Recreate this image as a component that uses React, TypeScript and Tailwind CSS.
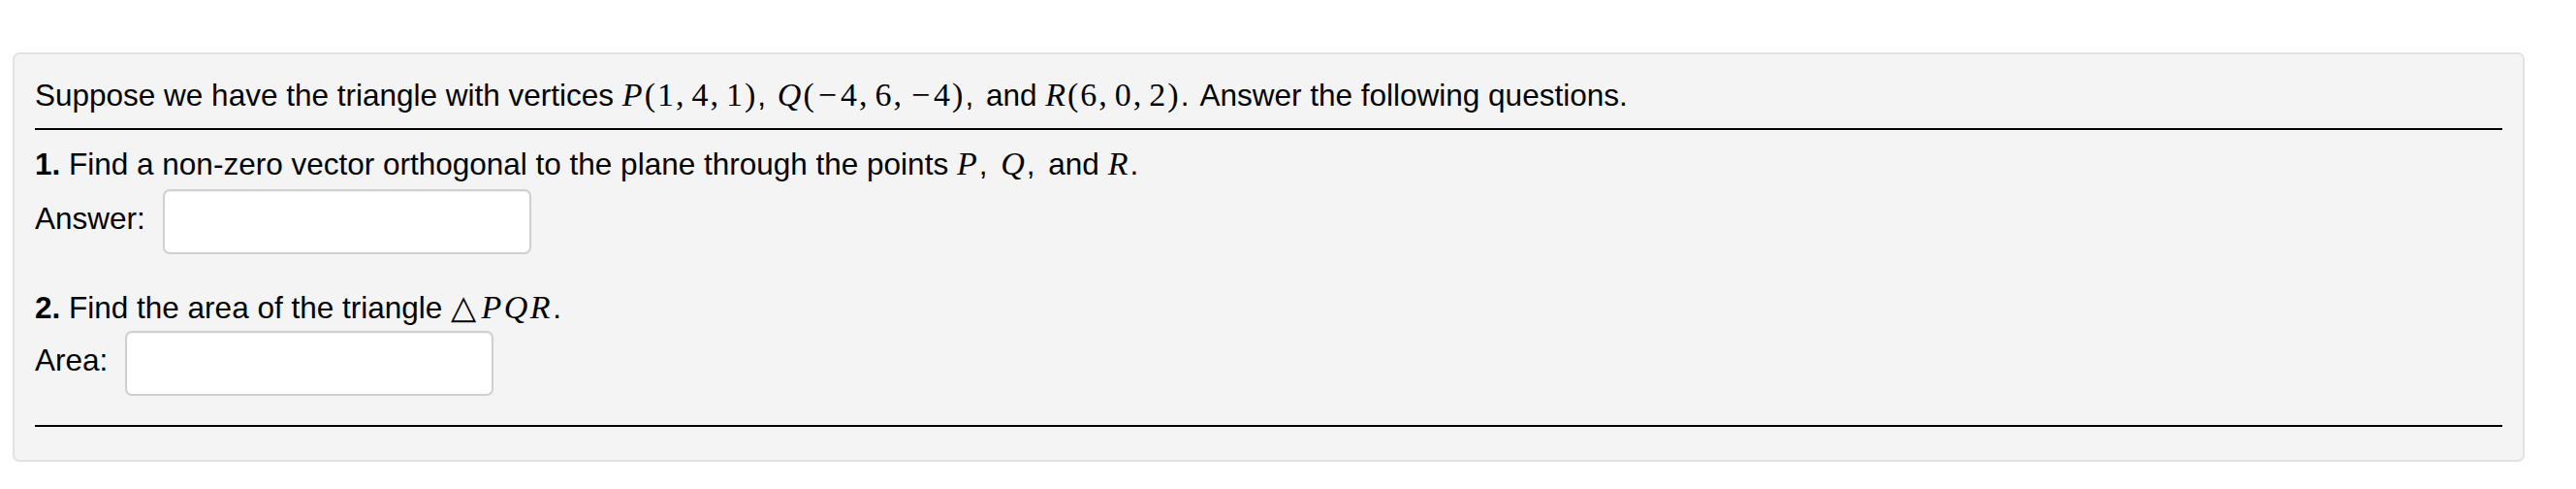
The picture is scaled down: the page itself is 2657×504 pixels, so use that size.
import type { ReactNode } from "react";

// math bits: serif, italic for variables
function M({ children, wide }: { children: ReactNode; wide?: boolean }) {
  return (
    <span
      className={
        wide
          ? "font-['Liberation_Serif',serif] text-[34px] leading-none tracking-[2.5px]"
          : "font-['Liberation_Serif',serif] text-[34px] leading-none tracking-[2px]"
      }
    >
      {children}
    </span>
  );
}

function V({ children }: { children: ReactNode }) {
  return <span className="italic">{children}</span>;
}

function C() {
  return <span className="mr-[6px]">,</span>;
}

// coordinates may carry a leading minus, drawn a bit wider like TeX's
function Num({ x }: { x: string }) {
  if (x.startsWith("−")) {
    return (
      <span>
        <span className="mx-[2px]">−</span>
        {x.slice(1)}
      </span>
    );
  }
  return <span>{x}</span>;
}

function Point({ name, xs }: { name: string; xs: string[] }) {
  return (
    <M>
      <V>{name}</V>(
      {xs.map((x, i) => (
        <span key={i}>
          <Num x={x} />
          {i < xs.length - 1 ? <C /> : null}
        </span>
      ))}
      )
    </M>
  );
}

function Field({ label }: { label: string }) {
  return (
    <div className="flex items-start gap-[18px]">
      <span className="mt-[8px]">{label}</span>
      <input
        type="text"
        className="w-[380px] h-[67px] bg-white border-2 border-[#cfcfcf] rounded-[7px] shadow-[inset_0_1px_2px_rgba(0,0,0,0.06)] outline-none"
      />
    </div>
  );
}

export default function App() {
  return (
    <div className="min-h-[504px] bg-white pt-[54px] pl-[13px] font-['Liberation_Sans',Arial,sans-serif] text-[31.5px] leading-[44px] text-black">
      <div className="w-[2591px] h-[422px] bg-[#f4f4f4] border-2 border-[#e2e2e2] rounded-[7px] px-[21px] pt-[20px]">
        <p>
          Suppose we have the triangle with vertices <Point name="P" xs={["1", "4", "1"]} />
          <span className="mr-[3px]">,</span> <Point name="Q" xs={["−4", "6", "−4"]} />
          <span className="mr-[4px]">,</span> and <Point name="R" xs={["6", "0", "2"]} />
          <span className="mr-[4px]">.</span> Answer the following questions.
        </p>
        <div className="mt-[12px] h-[2px] bg-black" />

        <p className="mt-[13px]">
          <b>1.</b> Find a non-zero vector orthogonal to the plane through the points{" "}
          <M>
            <V>P</V>
          </M>
          <span className="mr-[5px]">,</span>{" "}
          <M>
            <V>Q</V>
          </M>
          <span className="mr-[5px]">,</span> and{" "}
          <M>
            <V>R</V>
          </M>
          <span>.</span>
        </p>
        <div className="mt-[4px]">
          <Field label="Answer:" />
        </div>

        <p className="mt-[33px]">
          <b>2.</b> Find the area of the triangle{" "}
          <M wide>
            <span className="mr-[3px]">△</span>
            <V>PQR</V>
          </M>
          <span>.</span>
        </p>
        <div className="mt-[2px]">
          <Field label="Area:" />
        </div>

        <div className="mt-[30px] h-[2px] bg-black" />
      </div>
    </div>
  );
}
